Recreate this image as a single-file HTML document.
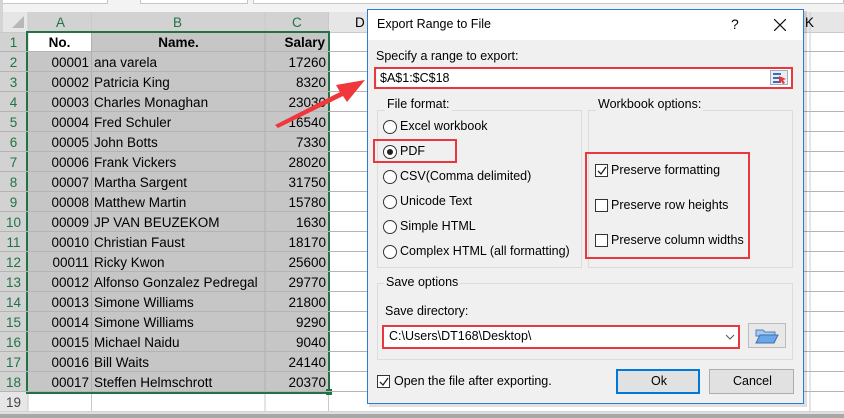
<!DOCTYPE html><html><head><style>
*{margin:0;padding:0;box-sizing:border-box}
body{width:844px;height:418px;overflow:hidden;background:#fff;font-family:"Liberation Sans",sans-serif;position:relative}
.a{position:absolute}
.t{font-size:12.5px;color:#000;white-space:nowrap}
.red{position:absolute;border:2px solid #e8373d}
.rad{position:absolute;width:14px;height:14px;border:1px solid #333;border-radius:50%;background:#fff}
.chk{position:absolute;width:13px;height:13px;border:1px solid #333;background:#fff}
.grp{position:absolute;border:1px solid #dcdcdc}
.s{font-size:13.5px}
</style></head><body>
<div class="a" style="left:0;top:0;width:844px;height:12px;background:#f3f3f3"></div>
<div class="a" style="left:0;top:0;width:108px;height:4px;background:#fff;border:1px solid #c6c6c6;border-top:none"></div>
<div class="a" style="left:140px;top:0;width:108px;height:4px;background:#fff;border:1px solid #c6c6c6;border-top:none"></div>
<div class="a" style="left:253px;top:0;width:591px;height:4px;background:#fff;border:1px solid #c6c6c6;border-top:none"></div>
<div class="a" style="left:0;top:0;width:3px;height:418px;background:#d4d4d4"></div>
<svg class="a" style="left:0;top:12px" width="844" height="406">
<rect x="3" y="0" width="841" height="20" fill="#e6e6e6"/>
<rect x="0" y="20" width="28" height="380" fill="#e6e6e6"/>
<rect x="28" y="0" width="300" height="20" fill="#d2d2d2"/>
<rect x="0" y="20" width="28" height="360" fill="#d2d2d2"/>
<path d="M12 16 L24 16 L24 4Z" fill="#b8b8b8"/>
<rect x="28" y="20" width="300" height="360" fill="#c6c6c6"/>
<rect x="28" y="20" width="63" height="20" fill="#fff"/>
<g stroke="#c9c9c9" stroke-width="1">
<line x1="28" y1="0" x2="28" y2="400"/><line x1="91.5" y1="0" x2="91.5" y2="400"/><line x1="265" y1="0" x2="265" y2="400"/><line x1="328.5" y1="0" x2="328.5" y2="400"/><line x1="810" y1="0" x2="810" y2="400"/>
</g>
<g stroke="#b0b0b0"><line x1="91.5" y1="20" x2="91.5" y2="380"/><line x1="265" y1="20" x2="265" y2="380"/></g>
<g stroke="#c9c9c9"><line x1="0" y1="20.5" x2="844" y2="20.5"/></g>
<rect x="27" y="20" width="302" height="361" fill="none" stroke="#217346" stroke-width="2"/>
<rect x="326" y="377" width="6" height="6" fill="#217346"/>
<rect x="0" y="402" width="844" height="4" fill="#a8a8a8"/>
<rect x="0" y="400" width="844" height="2" fill="#e0e0e0"/>
</svg>
<div class="a t s" style="left:56px;top:15px;color:#217346">A</div>
<div class="a t s" style="left:173px;top:15px;color:#217346">B</div>
<div class="a t s" style="left:292px;top:15px;color:#217346">C</div>
<div class="a t s" style="left:355px;top:15px">D</div>
<div class="a t s" style="left:805px;top:15px">K</div>
<div id="rows"></div>
<svg class="a" style="left:270px;top:70px" width="100" height="60"><path d="M5 55 L70 22 L66 15 L95 10 L77 32 L73 26 L8 58Z" fill="#f0373c"/></svg>
<div class="a" style="left:369px;top:11px;width:438px;height:396px;background:rgba(0,0,0,.12)"></div>
<div class="a" style="left:367px;top:9px;width:437px;height:395px;background:#f0f0f0;border:1px solid #2b7bd0"></div>
<div class="a" style="left:368px;top:10px;width:435px;height:30px;background:#fff"></div>
<div class="a t" style="left:377px;top:17px">Export Range to File</div>
<div class="a t" style="left:731px;top:16px;font-size:14px">?</div>
<svg class="a" style="left:774px;top:19px" width="12" height="12"><path d="M0 0L12 12M12 0L0 12" stroke="#111" stroke-width="1.2"/></svg>
<div class="a t" style="left:376px;top:49px">Specify a range to export:</div>
<div class="a" style="left:377px;top:69px;width:414px;height:18px;background:#fff"></div>
<div class="red" style="left:374px;top:67px;width:419px;height:22px"></div>
<div class="a t" style="left:380px;top:71px">$A$1:$C$18</div>
<svg class="a" style="left:770px;top:70px" width="18" height="15"><rect x=".5" y=".5" width="17" height="14" fill="#e8eef5" stroke="#aab"/><rect x="3" y="3" width="8" height="2" fill="#3a6fb5"/><rect x="3" y="7" width="8" height="2" fill="#3a6fb5"/><rect x="3" y="11" width="8" height="2" fill="#3a6fb5"/><path d="M9 6l7 3-3 1 2 3-2 1-2-3-2 2z" fill="#e33"/></svg>
<div class="grp" style="left:377px;top:110px;width:205px;height:158px"></div>
<div class="a t" style="left:385px;top:97px;background:#f0f0f0;padding:0 2px">File format:</div>
<div class="grp" style="left:588px;top:110px;width:205px;height:158px"></div>
<div class="a t" style="left:596px;top:97px;background:#f0f0f0;padding:0 2px">Workbook options:</div>
<div class="rad" style="left:383px;top:120px"></div><div class="a t" style="left:400px;top:119px">Excel workbook</div>
<div class="rad" style="left:383px;top:145px"></div><div class="a" style="left:387px;top:149px;width:6px;height:6px;border-radius:50%;background:#222"></div><div class="a t" style="left:400px;top:144px">PDF</div>
<div class="red" style="left:373px;top:139px;width:84px;height:24px"></div>
<div class="rad" style="left:383px;top:170px"></div><div class="a t" style="left:400px;top:169px">CSV(Comma delimited)</div>
<div class="rad" style="left:383px;top:195px"></div><div class="a t" style="left:400px;top:194px">Unicode Text</div>
<div class="rad" style="left:383px;top:220px"></div><div class="a t" style="left:400px;top:219px">Simple HTML</div>
<div class="rad" style="left:383px;top:245px"></div><div class="a t" style="left:400px;top:244px">Complex HTML (all formatting)</div>
<div class="chk" style="left:595px;top:164px"></div><svg class="a" style="left:597px;top:166px" width="10" height="10"><path d="M1 5l3 3 5-7" stroke="#222" fill="none" stroke-width="1.3"/></svg><div class="a t" style="left:611px;top:163px">Preserve formatting</div>
<div class="chk" style="left:595px;top:199px"></div><div class="a t" style="left:611px;top:198px">Preserve row heights</div>
<div class="chk" style="left:595px;top:234px"></div><div class="a t" style="left:611px;top:233px">Preserve column widths</div>
<div class="red" style="left:585px;top:152px;width:165px;height:107px"></div>
<div class="grp" style="left:377px;top:283px;width:416px;height:77px"></div>
<div class="a t" style="left:384px;top:275px;background:#f0f0f0;padding:0 2px">Save options</div>
<div class="a t" style="left:385px;top:304px">Save directory:</div>
<div class="a" style="left:384px;top:327px;width:354px;height:20px;background:#fff"></div>
<div class="red" style="left:382px;top:325px;width:358px;height:24px"></div>
<div class="a t" style="left:389px;top:329px">C:\Users\DT168\Desktop\</div>
<svg class="a" style="left:725px;top:334px" width="10" height="6"><path d="M1 1l4 4 4-4" stroke="#555" fill="none"/></svg>
<div class="a" style="left:748px;top:323px;width:38px;height:25px;background:#e8e8e8;border:1px solid #bcbcbc"></div>
<svg class="a" style="left:754px;top:327px" width="26" height="18"><path d="M2 3h7l2 2h10v4H2z" fill="#a9c8ea" stroke="#4a7fbf"/><path d="M2 16l4-8h18l-4 8z" fill="#6aa7e6" stroke="#3a70b0"/></svg>
<div class="chk" style="left:377px;top:375px"></div><svg class="a" style="left:379px;top:377px" width="10" height="10"><path d="M1 5l3 3 5-7" stroke="#222" fill="none" stroke-width="1.3"/></svg>
<div class="a t" style="left:394px;top:374px">Open the file after exporting.</div>
<div class="a" style="left:616px;top:369px;width:84px;height:25px;background:#e1e1e1;border:2px solid #0078d7"></div>
<div class="a t" style="left:651px;top:374px">Ok</div>
<div class="a" style="left:709px;top:369px;width:85px;height:25px;background:#e1e1e1;border:1px solid #adadad"></div>
<div class="a t" style="left:733px;top:374px">Cancel</div>
<script>
var d=[["No.","Name.","Salary"],["00001","ana varela","17260"],["00002","Patricia King","8320"],["00003","Charles Monaghan","23030"],["00004","Fred Schuler","16540"],["00005","John Botts","7330"],["00006","Frank Vickers","28020"],["00007","Martha Sargent","31750"],["00008","Matthew Martin","15780"],["00009","JP VAN BEUZEKOM","1630"],["00010","Christian Faust","18170"],["00011","Ricky Kwon","25600"],["00012","Alfonso Gonzalez Pedregal","29770"],["00013","Simone Williams","21800"],["00014","Simone Williams","9290"],["00015","Michael Naidu","9040"],["00016","Bill Waits","24140"],["00017","Steffen Helmschrott","20370"]];
var h="";
for(var i=0;i<19;i++){var y=32+i*20;
h+='<div class="a" style="left:0;top:'+(y+19)+'px;width:844px;height:1px;background:'+(i<18?'#b4b4b4':'#d4d4d4')+'"></div>';
h+='<div class="a t s" style="left:0;width:27px;text-align:center;top:'+(y+3)+'px;color:'+(i<18?'#217346':'#444')+'">'+(i+1)+'</div>';
if(i<18){var r=d[i];
if(i==0){h+='<div class="a t s" style="left:28px;width:63px;text-align:center;top:'+(y+3)+'px;font-weight:bold">No.</div><div class="a t s" style="left:92px;width:173px;text-align:center;top:'+(y+3)+'px;font-weight:bold">Name.</div><div class="a t s" style="left:265px;width:60px;text-align:right;top:'+(y+3)+'px;font-weight:bold">Salary</div>';}
else{h+='<div class="a t s" style="left:28px;width:61px;text-align:right;top:'+(y+3)+'px">'+r[0]+'</div><div class="a t s" style="left:94px;top:'+(y+3)+'px">'+r[1]+'</div><div class="a t s" style="left:265px;width:61px;text-align:right;top:'+(y+3)+'px">'+r[2]+'</div>';}}
}
document.getElementById("rows").innerHTML=h;
</script>
</body></html>
